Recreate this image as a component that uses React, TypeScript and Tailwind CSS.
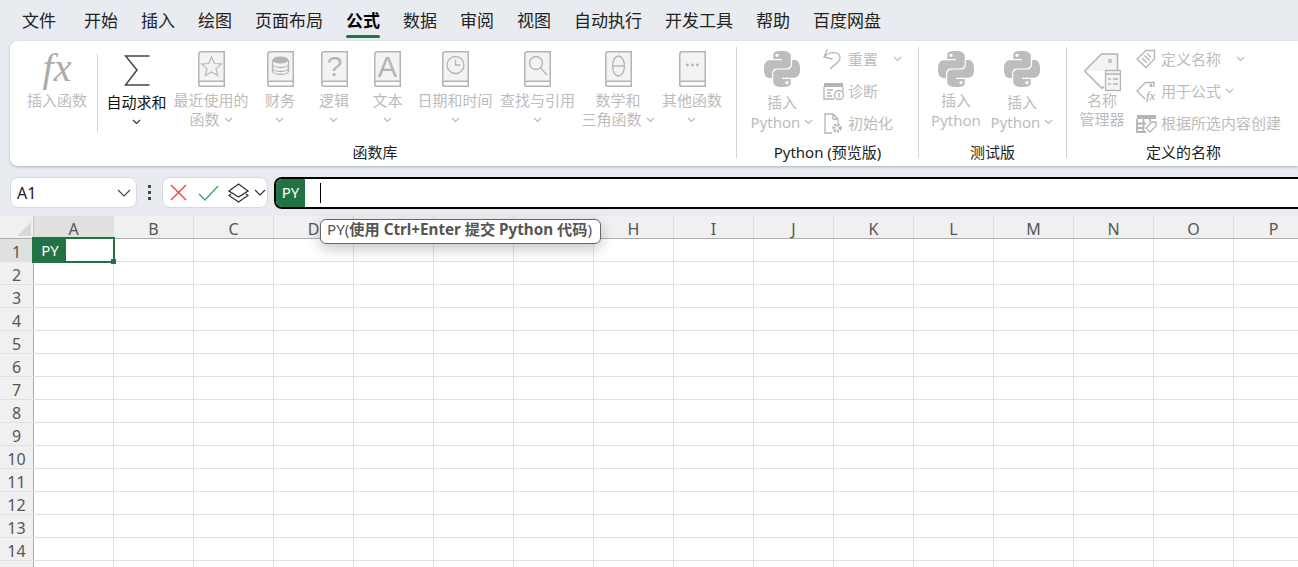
import type { ReactNode } from "react";
import { SiPython } from "react-icons/si";

const tabs = ["文件", "开始", "插入", "绘图", "页面布局", "公式", "数据", "审阅", "视图", "自动执行", "开发工具", "帮助", "百度网盘"];
const cols = ["A", "B", "C", "D", "E", "F", "G", "H", "I", "J", "K", "L", "M", "N", "O", "P"];
const rows = Array.from({ length: 15 }, (_, i) => i + 1);
// these letters sit behind the tooltip
const hiddenCols = ["E", "F", "G"];

const G = "#b4b4b4";

function Chev({ dark, className = "" }: { dark?: boolean; className?: string }) {
  return (
    <svg width="9" height="6" viewBox="0 0 9 6" className={`inline-block ${className}`}>
      <path d="M1 1l3.500 3.500L8 1" fill="none" stroke={dark ? "#333" : "#bbb"} strokeWidth="1.200" />
    </svg>
  );
}

function Book({ children }: { children: ReactNode }) {
  return (
    <svg width="27" height="36" viewBox="0 0 27 36" className="overflow-visible">
      <path d="M.750 33V3a2.500 2.500 0 0 1 2.500-2.250H26.250v34.500H3a2.250 2.250 0 0 1-2.250-2.250z" fill="#f3f3f3" stroke={G} strokeWidth="1.500" />
      <path d="M.750 33a2.250 2.250 0 0 1 2.250-2.750h23.250v5H3a2.250 2.250 0 0 1-2.250-2.250z" fill="#fff" stroke={G} strokeWidth="1.500" />
      {children}
    </svg>
  );
}

function Py({ size = 36 }: { size?: number }) {
  return <SiPython size={size} color="#bdbdbd" />;
}

function RibbonBtn({ w, icon, lines, chev, chevLine, dark, top = 0, leading = "leading-[19px]" }: {
  w: string;
  icon: ReactNode;
  lines: string[];
  chev?: boolean;
  chevLine?: boolean;
  dark?: boolean;
  top?: number;
  leading?: string;
}) {
  return (
    <div className={`${w} flex flex-col items-center shrink-0`}>
      <div className="h-[44px] flex items-center justify-center w-full">{icon}</div>
      <div className={`flex flex-col items-center whitespace-nowrap text-[15px] ${leading} ${dark ? "text-[#111]" : "text-[#bcbcbc]"} ${top ? "mt-[2px]" : ""}`}>
        {lines.map((l, i) => (
          <div key={l} className="flex items-center gap-[4px]">
            {l}
            {chev && i === lines.length - 1 && <Chev />}
          </div>
        ))}
        {chevLine && (
          <div className="h-[19px] flex items-center">
            <Chev dark={dark} />
          </div>
        )}
      </div>
    </div>
  );
}

function SmallBtn({ icon, label, chev, gap }: { icon: ReactNode; label: string; chev?: boolean; gap?: string }) {
  return (
    <div className="h-[32px] flex items-center text-[15px] text-[#bcbcbc] whitespace-nowrap">
      <div className="w-[25px] shrink-0 flex items-center">{icon}</div>
      {label}
      {chev && <Chev className={gap} />}
    </div>
  );
}

function Group({ label, width, labelClass = "", children }: { label: string; width: string; labelClass?: string; children: ReactNode }) {
  return (
    <div className={`${width} h-[111px] shrink-0 border-r border-[#d4d4d4] flex flex-col`}>
      <div className="h-[96px] flex">{children}</div>
      <div className={`h-[15px] leading-[18px] text-[15px] text-[#222] text-center whitespace-nowrap ${labelClass}`}>{label}</div>
    </div>
  );
}

function Ribbon() {
  const stroke = { fill: "none", stroke: G, strokeWidth: 1.300 };
  return (
    <div className="ml-[10px] h-[125px] pt-[6px] bg-white rounded-l-lg shadow-[0_1px_3px_rgba(0,0,0,0.25)] flex">
      <Group label="函数库" width="w-[727px]" labelClass="pl-[4px]">
        <RibbonBtn w="w-[74px] ml-[10px]" lines={["插入函数"]} icon={<span className="text-[40px] leading-none italic text-[#ababab] -mt-[3px]" style={{ fontFamily: "'Liberation Serif', serif" }}>fx</span>} />
        <div className="w-px h-[78px] mt-[7px] ml-[3px] mr-[1px] bg-[#d4d4d4] shrink-0" />
        <RibbonBtn w="w-[75px]" dark chevLine top={2} lines={["自动求和"]} icon={
          <svg width="26" height="31" viewBox="0 0 26 31" className="mt-[2px]">
            <path d="M25.500 1H1.500L13 15 1.500 30h24" fill="none" stroke="#444" strokeWidth="1.500" />
          </svg>
        } />
        <RibbonBtn w="w-[74px]" chev lines={["最近使用的", "函数"]} icon={<Book><path d="M13.500 6l2.800 6.500 7.200.500-5.500 4.700 1.700 7-6.200-3.700-6.200 3.700 1.700-7-5.500-4.700 7.200-.500z" fill="none" stroke={G} strokeWidth="1.100" /></Book>} />
        <RibbonBtn w="w-[64px]" chevLine lines={["财务"]} icon={<Book><ellipse cx="13.500" cy="9" rx="8" ry="3.500" fill={G} /><path d="M5.500 9v11c0 2 3.500 3.500 8 3.500s8-1.500 8-3.500V9M5.500 13c0 2 3.500 3.500 8 3.500s8-1.500 8-3.500M5.500 17c0 2 3.500 3.500 8 3.500s8-1.500 8-3.500" {...stroke} /></Book>} />
        <RibbonBtn w="w-[44px]" chevLine lines={["逻辑"]} icon={<Book><text x="13.500" y="25" textAnchor="middle" fontSize="28" fill={G} fontFamily="'Liberation Sans', sans-serif">?</text></Book>} />
        <RibbonBtn w="w-[63px]" chevLine lines={["文本"]} icon={<Book><text x="13.500" y="26" textAnchor="middle" fontSize="29" fill={G} fontFamily="'Liberation Sans', sans-serif">A</text></Book>} />
        <RibbonBtn w="w-[72px]" chevLine lines={["日期和时间"]} icon={<Book><circle cx="13.500" cy="14" r="8.500" {...stroke} /><path d="M13.500 8.500V14h5" {...stroke} /></Book>} />
        <RibbonBtn w="w-[93px]" chevLine lines={["查找与引用"]} icon={<Book><circle cx="12" cy="12" r="6.500" {...stroke} /><path d="M16.500 17L23 24" {...stroke} /></Book>} />
        <RibbonBtn w="w-[68px]" chev lines={["数学和", "三角函数"]} icon={<Book><ellipse cx="13.500" cy="15" rx="6" ry="10" {...stroke} /><path d="M7.500 15h12" {...stroke} /></Book>} />
        <RibbonBtn w="w-[80px]" chevLine lines={["其他函数"]} icon={<Book><circle cx="8.500" cy="14" r="1.400" fill={G} /><circle cx="13.500" cy="14" r="1.400" fill={G} /><circle cx="18.500" cy="14" r="1.400" fill={G} /></Book>} />
      </Group>
      <Group label="Python (预览版)" width="w-[182px]">
        <RibbonBtn w="w-[84px] ml-[3px]" chev top={1} leading="leading-[19.500px]" lines={["插入", "Python"]} icon={<Py />} />
        <div className="-ml-[1px] w-[95px] -mt-[4px] shrink-0">
          <SmallBtn label="重置" chev gap="ml-[15px]" icon={
            <svg width="19" height="22" viewBox="0 0 19 22">
              <path d="M4.500 1L1 9l8.500 2M1 9C7 3 17 3 17 10c0 4-6 7-10 11" {...stroke} />
            </svg>
          } />
          <SmallBtn label="诊断" icon={
            <svg width="21" height="18" viewBox="0 0 21 18">
              <path d="M1 1h19v4H1z" fill={G} />
              <path d="M1 5v12h10M20 5v4M4 8h6M4 11h4M4 14h5" {...stroke} />
              <circle cx="16" cy="13" r="4.500" {...stroke} />
              <path d="M16 11v4.500" {...stroke} />
            </svg>
          } />
          <SmallBtn label="初始化" icon={
            <svg width="19" height="21" viewBox="0 0 19 21" className="ml-[1px]">
              <path d="M8 20H1V1h8l5 5v4M9 1v5h5" {...stroke} />
              <circle cx="13" cy="15" r="3.200" fill="none" stroke={G} strokeWidth="3" strokeDasharray="2 1" />
            </svg>
          } />
        </div>
      </Group>
      <Group label="测试版" width="w-[148px]">
        <RibbonBtn w="w-[66px] ml-[4px]" leading="leading-[19.500px]" lines={["插入", "Python"]} icon={<Py />} />
        <RibbonBtn w="w-[66px]" chev top={1} leading="leading-[19.500px]" lines={["插入", "Python"]} icon={<Py />} />
      </Group>
      <div className="h-[111px] flex flex-col flex-1">
        <div className="h-[96px] flex">
          <RibbonBtn w="w-[66px] ml-[2px]" lines={["名称", "管理器"]} icon={
            <svg width="38" height="40" viewBox="0 0 38 40" className="mt-[5px]">
              <path d="M1.500 19L18.500 2h16v17M1.500 19L19 36.500l2-2" fill="#f3f3f3" stroke={G} strokeWidth="1.500" />
              <circle cx="27" cy="9" r="1.500" {...stroke} />
              <rect x="22.500" y="18.500" width="15" height="20" fill="#f3f3f3" stroke={G} strokeWidth="1.300" />
              <path d="M22.500 22h15M25 27h3M25 32h3M30 27h5M30 32h5" {...stroke} />
            </svg>
          } />
          <div className="ml-[1px] -mt-[4px] w-[160px] shrink-0">
            <SmallBtn label="定义名称" chev gap="ml-[15px]" icon={
              <svg width="20" height="20" viewBox="0 0 20 20">
                <path d="M1 10L10 1.500h8.500V10L10 18.500zM6 9l5 5M8.500 6.500l5 5M11 4.500l4 4" {...stroke} />
              </svg>
            } />
            <SmallBtn label="用于公式" chev gap="ml-[4px]" icon={
              <svg width="21" height="21" viewBox="0 0 21 21">
                <path d="M9 18L1 10l8.500-8.500H18V6" {...stroke} />
                <circle cx="15" cy="4.500" r="1" {...stroke} />
                <text x="10" y="19" fontSize="13" fontStyle="italic" fill="#a8a8a8" fontFamily="'Liberation Serif', serif">fx</text>
              </svg>
            } />
            <SmallBtn label="根据所选内容创建" icon={
              <svg width="21" height="19" viewBox="0 0 21 19">
                <path d="M1 1h19v4H1z" fill={G} />
                <path d="M1 5v13h9M7.500 5v13M1 9.500h9M1 14h6M14 5v3" fill="none" stroke={G} strokeWidth="1.800" />
                <path d="M10 14l6-6h4v4l-6 6z" fill="#fff" stroke={G} strokeWidth="1.300" />
              </svg>
            } />
          </div>
        </div>
        <div className="h-[15px] leading-[18px] text-[15px] text-[#222] pl-[79px]">定义的名称</div>
      </div>
    </div>
  );
}

function FormulaBar() {
  return (
    <div className="mt-[11px] h-[31px] flex items-center">
      <div className="ml-[10px] w-[127px] h-[31px] bg-white border border-[#d9d9d9] rounded-lg flex items-center justify-between pl-[6px] pr-[5px] text-[16px] text-[#222]">
        A1
        <svg width="14" height="8" viewBox="0 0 14 8"><path d="M1 1l6 6 6-6" fill="none" stroke="#444" strokeWidth="1.200" /></svg>
      </div>
      <div className="w-[25px] flex flex-col items-center gap-[3px]">
        <span className="w-[3px] h-[3px] bg-[#444]" />
        <span className="w-[3px] h-[3px] bg-[#444]" />
        <span className="w-[3px] h-[3px] bg-[#444]" />
      </div>
      <div className="w-[106px] h-[31px] bg-white border border-[#d9d9d9] rounded-lg flex items-center pl-[7px]">
        <svg width="17" height="17" viewBox="0 0 17 17"><path d="M1 1l15 15M16 1L1 16" fill="none" stroke="#e8403d" strokeWidth="1.400" /></svg>
        <svg width="21" height="16" viewBox="0 0 21 16" className="ml-[11px]"><path d="M1 9l6 6L20 1" fill="none" stroke="#3fa45f" strokeWidth="1.400" /></svg>
        <svg width="21" height="20" viewBox="0 0 21 20" className="ml-[9px]">
          <path d="M10.500 1L20 8l-9.500 6L1 8z" fill="none" stroke="#333" strokeWidth="1.300" />
          <path d="M3 11l-2 1.500 9.500 6.500 9.500-6.500-2-1.500" fill="none" stroke="#333" strokeWidth="1.300" />
        </svg>
        <svg width="12" height="7" viewBox="0 0 12 7" className="ml-[5px]"><path d="M1 1l5 5 5-5" fill="none" stroke="#333" strokeWidth="1.200" /></svg>
      </div>
      <div className="ml-[6px] flex-1 h-[32px] bg-white border-y-2 border-l-2 border-black rounded-l-lg flex items-center overflow-hidden">
        <div className="w-[29px] h-full bg-[#217346] text-white text-[15px] flex items-center justify-center rounded-l-[5px]">PY</div>
        <span className="ml-[15px] w-px h-[20px] bg-black" />
      </div>
    </div>
  );
}

function Sheet() {
  return (
    <div className="relative mt-[8px] bg-white">
      <div className="flex h-[22px] bg-[#f0f0f0] border-b border-[#aeaeae] box-content">
        <div className="w-[34px] shrink-0 border-r border-[#c8c8c8] relative">
          <div className="absolute right-[2px] bottom-[2px] w-0 h-0 border-l-[14px] border-l-transparent border-b-[14px] border-b-[#d9d9d9]" />
        </div>
        {cols.map((c, i) => (
          <div key={c} className={`w-[80px] shrink-0 border-r border-[#dcdcdc] text-center text-[16px] leading-[26px] text-[#555] ${i === 0 ? "bg-[#e0e0e0]" : ""}`}>
            {hiddenCols.includes(c) ? "" : c}
          </div>
        ))}
      </div>
      {rows.map((r) => (
        <div key={r} className="flex h-[23px] border-b border-[#e0e0e0]">
          <div className={`w-[34px] shrink-0 border-r border-[#aeaeae] text-center text-[16px] leading-[27px] text-[#555] ${r === 1 ? "bg-[#e0e0e0]" : "bg-[#f0f0f0]"}`}>{r < 15 ? r : ""}</div>
          {cols.map((c) => (
            <div key={c} className="w-[80px] shrink-0 border-r border-[#e0e0e0]" />
          ))}
        </div>
      ))}
      {/* active cell */}
      <div className="absolute left-[32px] top-[21px] w-[83px] h-[26px] border-2 border-[#217346] bg-white flex">
        <div className="w-[32px] bg-[#217346] text-white text-[15px] leading-[22px] text-center">PY</div>
        <div className="absolute -right-[3px] -bottom-[3px] w-[5px] h-[5px] bg-[#217346]" />
      </div>
      {/* tooltip */}
      <div className="absolute left-[320px] top-[3px] w-[281px] h-[25px] bg-white border border-[#666] rounded-md shadow-[0_5px_14px_rgba(0,0,0,0.22)] flex items-center pl-[6px] pb-[5px] text-[15.200px] text-[#555] whitespace-nowrap">
        PY(<b className="font-bold">使用 Ctrl+Enter 提交 Python 代码</b>)
      </div>
    </div>
  );
}

export default function App() {
  return (
    <div className="w-[1298px] h-[567px] overflow-hidden bg-[#e8ebf0]" style={{ fontFamily: "'Noto Sans', 'Noto Sans CJK SC', sans-serif" }}>
      <div className="h-[41px] flex pl-[22px] gap-[23px] text-[17px] text-[#222] whitespace-nowrap">
        {tabs.map((t, i) => (
          <div key={t} className={`relative w-fit leading-[42px] ${i === 0 ? "mr-[5px]" : ""} ${t === "公式" ? "font-bold text-black" : ""}`}>
            {t}
            {t === "公式" && <div className="absolute left-0 right-0 top-[35px] h-[3px] rounded-sm bg-[#217346]" />}
          </div>
        ))}
      </div>
      <Ribbon />
      <FormulaBar />
      <Sheet />
    </div>
  );
}
